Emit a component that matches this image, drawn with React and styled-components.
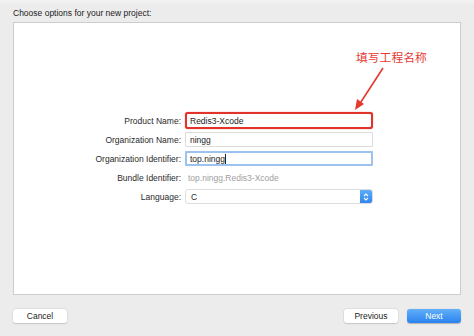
import React from 'react';
import styled, { createGlobalStyle } from 'styled-components';

const GlobalStyle = createGlobalStyle`
    html, body {
        margin: 0;
        padding: 0;
        background: #ececec;
    }
    body {
        font-family: "Liberation Sans", Helvetica, Arial, sans-serif;
        color: #2a2a2a;
    }
`;

const Page = styled.div`
    width: 474px;
    height: 336px;
    box-sizing: border-box;
    padding: 0 13px;
    display: flex;
    flex-direction: column;
    background: linear-gradient(#f4f4f4 0, #ececec 4px);
`;

const Header = styled.div`
    height: 22px;
    box-sizing: border-box;
    padding-top: 8px;
    font-size: 8.5px;
    line-height: 10px;
    color: #222;
`;

const Panel = styled.div`
    position: relative;
    height: 273px;
    box-sizing: border-box;
    background: #fff;
    border: 1px solid #cdcdcd;
    padding-top: 88px;
`;

const Form = styled.div`
    display: grid;
    grid-template-columns: 167px 188px;
    grid-auto-rows: 19px;
    column-gap: 4px;
    align-items: center;
`;

const Label = styled.div`
    text-align: right;
    font-size: 8.5px;
    color: #2a2a2a;
`;

const Field = styled.div`
    height: 15px;
    box-sizing: border-box;
    display: flex;
    align-items: center;
    padding-left: 4px;
    font-size: 8.5px;
    color: #222;
    background: #fff;
    border: ${p => p.$highlight ? '2px solid #e2332b' : p.$focus ? '2px solid #9cc3f0' : '1px solid #dcdcdc'};
    border-radius: ${p => p.$highlight ? '3px' : '1px'};
    box-shadow: ${p => p.$highlight ? '0 0 1px #e2332b' : 'none'};
    padding-left: ${p => (p.$highlight || p.$focus) ? '3px' : '4px'};
    height: ${p => p.$highlight ? '17px' : '15px'};
`;

const Caret = styled.span`
    display: inline-block;
    width: 1px;
    height: 10px;
    background: #222;
    margin-left: 0.5px;
`;

const Plain = styled.div`
    font-size: 8.5px;
    color: #a0a0a0;
    padding-left: 3px;
`;

const Popup = styled.div`
    height: 15px;
    box-sizing: border-box;
    display: flex;
    align-items: center;
    justify-content: space-between;
    border: 1px solid #dedede;
    border-radius: 3px;
    background: #fff;
    font-size: 8.5px;
    padding-left: 5px;
    overflow: hidden;
`;

const Stepper = styled.div`
    width: 12px;
    height: 100%;
    background: linear-gradient(#5cadf8, #2f86ef);
    display: flex;
    align-items: center;
    justify-content: center;
`;

const Annotation = styled.div`
    position: absolute;
    left: 342px;
    top: 27px;
    font-family: "Noto Sans CJK SC", "Liberation Sans", sans-serif;
    font-size: 11.8px;
    line-height: 14px;
    color: #e5392f;
    letter-spacing: 0;
`;

const Arrow = styled.svg`
    position: absolute;
    left: 336px;
    top: 40px;
`;

const Footer = styled.div`
    display: flex;
    justify-content: space-between;
    padding-top: 14px;
`;

const ButtonGroup = styled.div`
    display: flex;
    gap: 9px;
`;

const Button = styled.div`
    width: 54px;
    height: 14px;
    box-sizing: border-box;
    display: flex;
    align-items: center;
    justify-content: center;
    border-radius: 3px;
    font-size: 8.5px;
    color: ${p => p.$primary ? '#fff' : '#222'};
    background: ${p => p.$primary ? 'linear-gradient(#62b0f9, #2a82ef)' : '#fff'};
    box-shadow: ${p => p.$primary ? '0 0.5px 1px rgba(0,0,0,0.25)' : '0 0 0 0.5px #d4d4d4, 0 0.5px 1px rgba(0,0,0,0.2)'};
`;

const App = () => (
    <>
        <GlobalStyle />
        <Page>
            <Header>Choose options for your new project:</Header>
            <Panel>
                <Annotation>填写工程名称</Annotation>
                <Arrow width="40" height="50" viewBox="0 0 40 50">
                    <line x1="33" y1="5" x2="9" y2="42" stroke="#e5392f" strokeWidth="1.6" />
                    <polygon points="5,47 7,36 14,41" fill="#e5392f" />
                </Arrow>
                <Form>
                    <Label>Product Name:</Label>
                    <Field $highlight>Redis3-Xcode</Field>

                    <Label>Organization Name:</Label>
                    <Field>ningg</Field>

                    <Label>Organization Identifier:</Label>
                    <Field $focus>top.ningg<Caret /></Field>

                    <Label>Bundle Identifier:</Label>
                    <Plain>top.ningg.Redis3-Xcode</Plain>

                    <Label>Language:</Label>
                    <Popup>
                        C
                        <Stepper>
                            <svg width="6" height="10" viewBox="0 0 6 10">
                                <polyline points="1,4 3,2 5,4" fill="none" stroke="#fff" strokeWidth="1.1" />
                                <polyline points="1,6 3,8 5,6" fill="none" stroke="#fff" strokeWidth="1.1" />
                            </svg>
                        </Stepper>
                    </Popup>
                </Form>
            </Panel>
            <Footer>
                <Button>Cancel</Button>
                <ButtonGroup>
                    <Button>Previous</Button>
                    <Button $primary>Next</Button>
                </ButtonGroup>
            </Footer>
        </Page>
    </>
);

export default App;
